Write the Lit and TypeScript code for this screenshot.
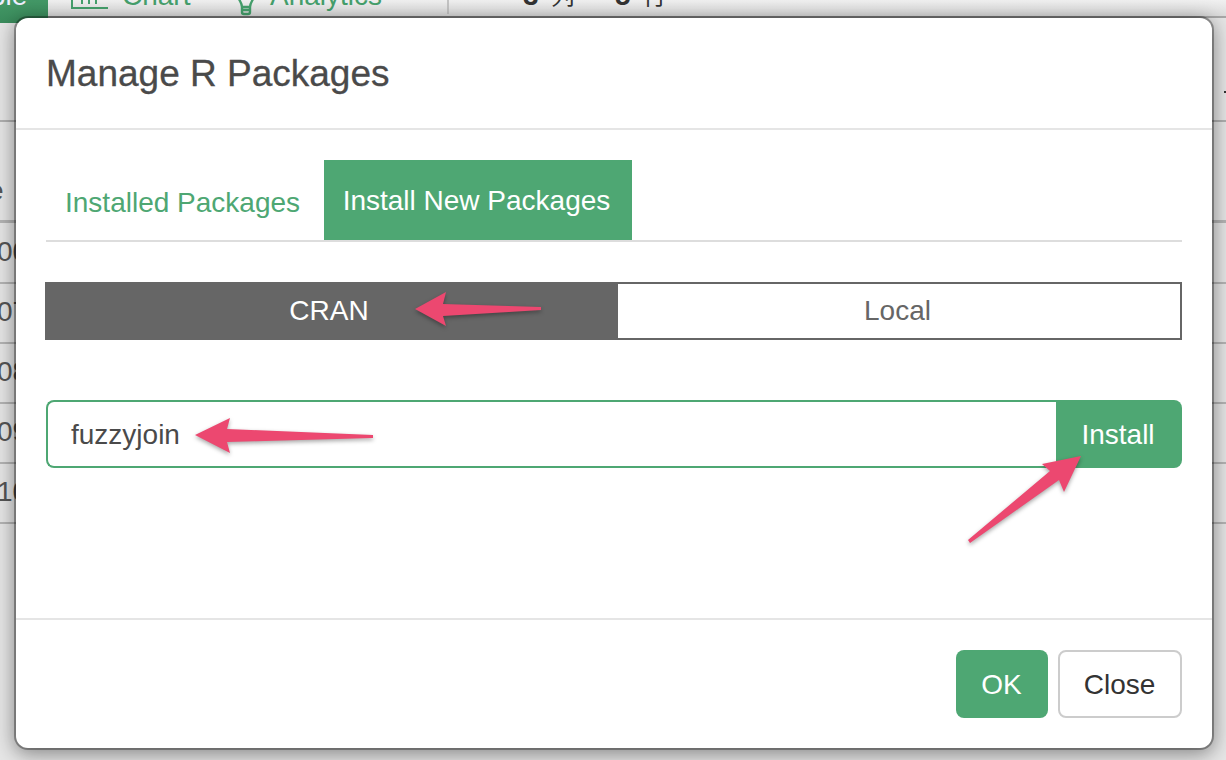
import { LitElement, html, css, svg } from "lit";
import { customElement } from "lit/decorators.js";

const arrow = (d: string) => html`<svg class="arrow-svg" viewBox="0 0 1226 760">${svg`<path d="${d}" fill="#ec4870"></path>`}</svg>`;

@customElement("app-root")
export class AppRoot extends LitElement {
  static styles = css`
    :host { display: block; width: 1226px; height: 760px; position: relative; overflow: hidden; background: #e6e6e6; font-family: "Liberation Sans", Arial, "Noto Sans CJK SC", sans-serif; color: #4a4a4a; }
    .toolbar { height: 16px; display: flex; background: linear-gradient(#f0f0f0, #dcdcdc); border-bottom: 2px solid #a8a8a8; }
    .tools { height: 50px; margin-top: -27px; display: flex; font-size: 28px; color: #45a06c; }
    .tool { height: 50px; line-height: 46px; display: flex; flex: none; align-items: flex-start; }
    .tab { width: 48px; height: 50px; background: linear-gradient(#4ea773, #3a8c5c); color: #eef; line-height: 46px; box-sizing: border-box; text-indent: -10px; overflow: hidden; flex: none; }
    .chart { margin-left: 23px; gap: 14px; width: 117px; }
    .bulb { margin-left: 48px; gap: 14px; width: 211px; }
    .tool svg { flex: none; width: 37px; height: 50px; }
    .bulb svg { width: 20px; }
    .sep { width: 2px; height: 41px; background: #c4c4c4; flex: none; }
    .count { display: flex; flex: none; color: #333; line-height: 46px; font-weight: 700; }
    .count span { font-weight: 400; font-size: 24px; }
    .c1 { margin-left: 74px; gap: 12px; width: 92px; }
    .c2 { gap: 12px; }
    .bar2 { height: 102px; border-bottom: 2px solid #b0b0b0; display: flex; justify-content: flex-end; }
    .caret { width: 2px; height: 2px; background: #333; margin-top: 73px; }
    .row { height: 58px; border-bottom: 2px solid #b4b4b4; font-size: 28px; color: #555; line-height: 56px; text-indent: -3px; }
    .first { height: 59px; line-height: 58px; }
    .head { height: 98px; border-bottom-width: 3px; line-height: 138px; text-indent: -12px; }
    .modal { position: absolute; left: 16px; top: 18px; width: 1196px; height: 730px; box-sizing: border-box; background: #fff; border-radius: 12px; box-shadow: 0 0 0 2px rgba(0,0,0,.32), 0 4px 20px 2px rgba(0,0,0,.42); display: flex; flex-direction: column; }
    .header { height: 108px; flex: none; border-bottom: 2px solid #e5e5e5; padding: 2px 30px 0; display: flex; align-items: center; font-size: 37px; color: #4a4a4a; -webkit-text-stroke: .3px #4a4a4a; }
    .body { flex: 1; padding: 30px 30px 0; }
    .tabs { display: flex; height: 80px; border-bottom: 2px solid #ddd; }
    .t1 { width: 278px; color: #4ea773; font-size: 28px; display: flex; align-items: center; padding: 6px 0 0 19px; box-sizing: border-box; }
    .t2 { width: 308px; background: #4ea773; color: #fff; font-size: 28px; display: flex; align-items: center; justify-content: center; padding: 2px 3px 0 0; box-sizing: border-box; }
    .seg { margin: 40px 0 0 -1px; height: 58px; display: flex; box-sizing: border-box; border: 2px solid #666; font-size: 28px; }
    .s1 { width: 571px; background: #666; color: #fff; display: flex; align-items: center; justify-content: center; padding-right: 7px; box-sizing: border-box; }
    .s2 { flex: 1; display: flex; align-items: center; justify-content: center; color: #666; padding-right: 3px; }
    .input { margin-top: 60px; height: 68px; display: flex; }
    .field { flex: 1; border: 2px solid #4ea773; border-right: 0; border-radius: 8px 0 0 8px; display: flex; align-items: center; padding: 2px 0 0 23px; box-sizing: border-box; font-size: 28px; color: #4a4a4a; }
    .inst { width: 126px; background: #4ea773; color: #fff; border-radius: 0 8px 8px 0; font-size: 28px; display: flex; align-items: center; justify-content: center; padding: 2px 2px 0 0; box-sizing: border-box; }
    .footer { height: 130px; flex: none; border-top: 2px solid #e5e5e5; padding: 30px; box-sizing: border-box; display: flex; justify-content: flex-end; gap: 10px; }
    .btn { height: 68px; border-radius: 8px; box-sizing: border-box; font-size: 28px; display: flex; align-items: center; justify-content: center; padding: 2px 1px 0 0; }
    .ok { width: 92px; background: #4ea773; color: #fff; }
    .close { width: 124px; border: 2px solid #ccc; color: #333; }
    .arrow-svg { position: absolute; left: 0; top: 0; width: 1226px; height: 760px; filter: drop-shadow(0 2px 2px rgba(0,0,0,.35)); pointer-events: none; }
  `;
  render() {
    return html`
      <div class="toolbar">
        <div class="tools">
          <div class="tab">ble</div>
          <div class="tool chart">
            <svg viewBox="0 0 37 50" fill="none" stroke="#45a06c" stroke-width="2">
              <path d="M1 20 V35 H37 M11 24 V31 M18 22 V31 M25 25 V31"></path>
            </svg>
            Chart
          </div>
          <div class="tool bulb">
            <svg viewBox="0 0 20 50" fill="none" stroke="#45a06c" stroke-width="2.4">
              <path d="M2 22 C2 27 6 29 6 34 H14 C14 29 18 27 18 22 M6 37 H14 M6 34 V39 Q6 41 8 41 H12 Q14 41 14 39 V34"></path>
            </svg>
            Analytics
          </div>
          <div class="sep"></div>
          <div class="count c1">3<span>列</span></div>
          <div class="count c2">5<span>行</span></div>
        </div>
      </div>
      <div class="bar2"><div class="caret"></div></div>
      <div class="row head">e</div>
      <div class="row first">00</div><div class="row">07</div><div class="row">08</div><div class="row">09</div><div class="row">10</div>
      <div class="modal">
        <div class="header">Manage R Packages</div>
        <div class="body">
          <div class="tabs"><div class="t1">Installed Packages</div><div class="t2">Install New Packages</div></div>
          <div class="seg"><div class="s1">CRAN</div><div class="s2">Local</div></div>
          <div class="input"><div class="field">fuzzyjoin</div><div class="inst">Install</div></div>
        </div>
        <div class="footer"><div class="btn ok">OK</div><div class="btn close">Close</div></div>
      </div>
      ${arrow("M415 309 L446 292 L443 304 L541 307 L541 310 L443 316 L446 326 Z")}
      ${arrow("M195 435 L230 418 L227 429 L373 435 L373 438 L227 442 L230 453 Z")}
      ${arrow("M1081 456 L1064 492 L1059 480 L970 543 L968 540 L1050 471 L1042 464 Z")}
    `;
  }
}
